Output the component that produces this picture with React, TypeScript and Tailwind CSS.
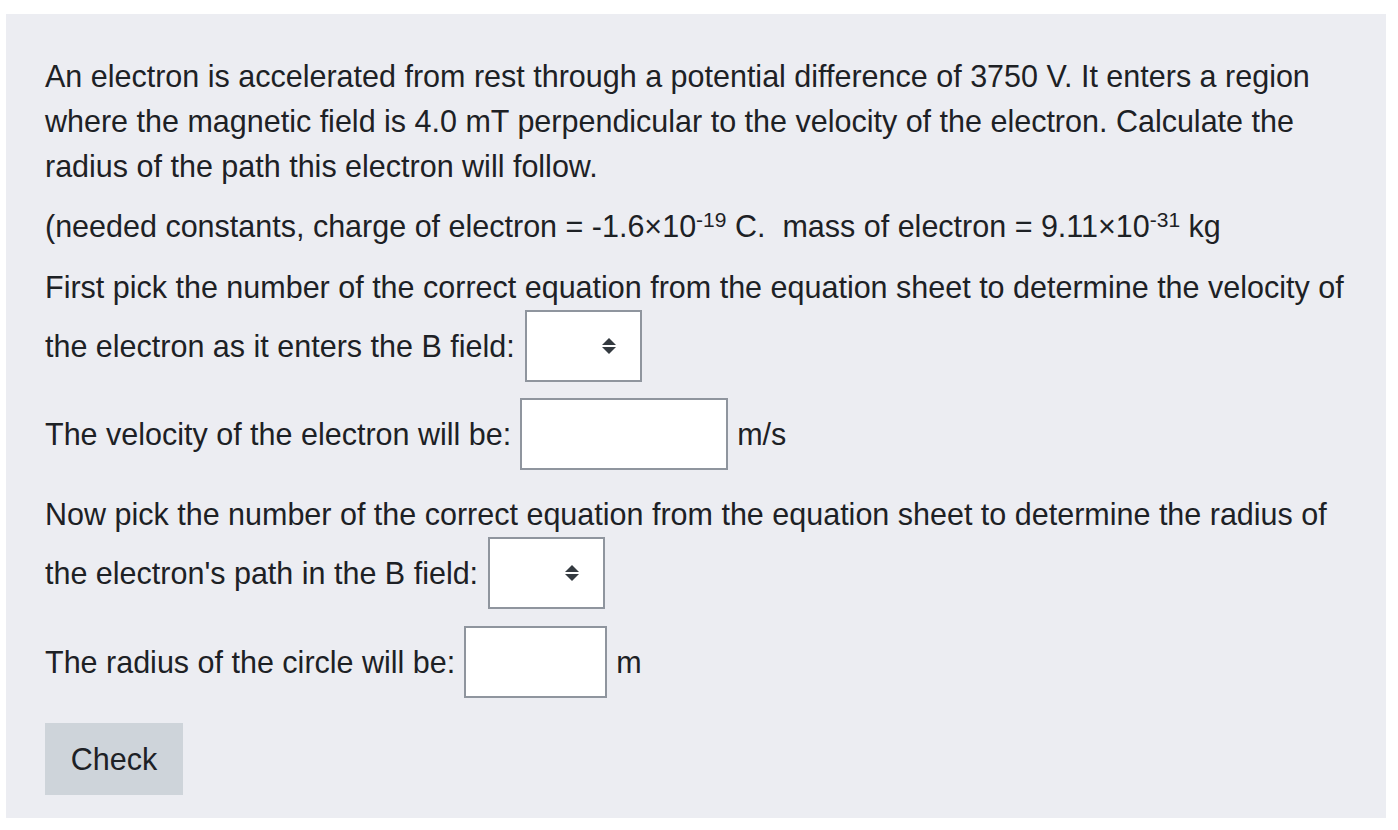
import React from 'react'

function SelectBox() {
  return (
    <div className="inline-flex h-[72px] w-[117px] items-center justify-end border-2 border-[#8f959e] bg-white pr-[23px]">
      <svg width="16" height="20" viewBox="0 0 16 20" className="text-[#343a40]">
        <path d="M8 2 L15 9 L1 9 Z" fill="currentColor" />
        <path d="M1 11 L15 11 L8 18 Z" fill="currentColor" />
      </svg>
    </div>
  )
}

function TextBox({ width }: { width: string }) {
  return <div className={`h-[72px] ${width} border-2 border-[#8f959e] bg-white`} />
}

export default function App() {
  return (
    <div className="min-h-screen bg-white pt-[14px] pl-[6px] font-['Liberation_Sans',Arial,sans-serif] text-[30.5px] leading-[45px] text-[#1d2125]">
      <div className="w-[1380px] bg-[#ecedf2] pt-[40px] pb-[23px] pl-[39px] pr-[31px]">
        <p>
          An electron is accelerated from rest through a potential difference of 3750 V. It enters a region
          where the magnetic field is 4.0 mT perpendicular to the velocity of the electron. Calculate the
          radius of the path this electron will follow.
        </p>

        <p className="mt-[15px]">
          (needed constants, charge of electron = -1.6×10
          <sup className="text-[21px]">-19</sup> C.&nbsp; mass of electron = 9.11×10
          <sup className="text-[21px]">-31</sup> kg
        </p>

        <div className="mt-[16px]">
          <p>First pick the number of the correct equation from the equation sheet to determine the velocity of</p>
          <div className="flex items-center gap-[10px]">
            <span>the electron as it enters the B field:</span>
            <SelectBox />
          </div>
        </div>

        <div className="mt-[16px] flex items-center">
          <span>The velocity of the electron will be:</span>
          <div className="ml-[9px]">
            <TextBox width="w-[208px]" />
          </div>
          <span className="ml-[9px]">m/s</span>
        </div>

        <div className="mt-[22px]">
          <p>Now pick the number of the correct equation from the equation sheet to determine the radius of</p>
          <div className="flex items-center gap-[10px]">
            <span>the electron's path in the B field:</span>
            <SelectBox />
          </div>
        </div>

        <div className="mt-[17px] flex items-center">
          <span>The radius of the circle will be:</span>
          <div className="ml-[9px]">
            <TextBox width="w-[143px]" />
          </div>
          <span className="ml-[9px]">m</span>
        </div>

        <button className="mt-[25px] block h-[72px] w-[138px] bg-[#ced4da] text-[30.5px] text-[#1d2125]">Check</button>
      </div>
    </div>
  )
}
